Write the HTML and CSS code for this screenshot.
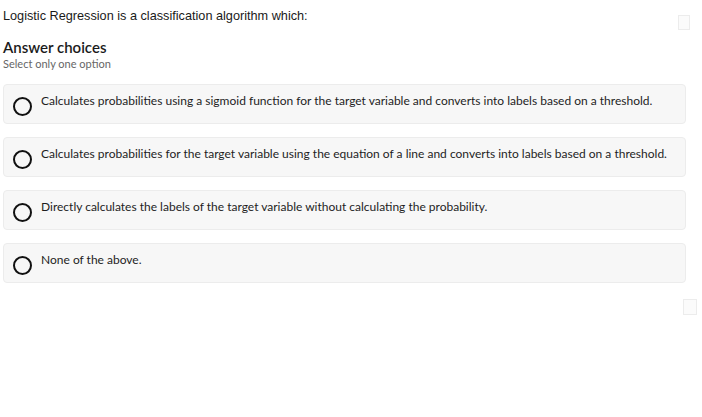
FILE: index.html
```html
<!DOCTYPE html>
<html>
<head>
<meta charset="utf-8">
<link rel="stylesheet" href="styles.css">
</head>
<body>
<div class="page">
  <p class="question">Logistic Regression is a classification algorithm which:</p>
  <h2 class="title">Answer choices</h2>
  <p class="hint">Select only one option</p>
  <ul class="choices">
    <li class="choice"><span class="radio"></span><span class="label">Calculates probabilities using a sigmoid function for the target variable and converts into labels based on a threshold.</span></li>
    <li class="choice"><span class="radio"></span><span class="label">Calculates probabilities for the target variable using the equation of a line and converts into labels based on a threshold.</span></li>
    <li class="choice"><span class="radio"></span><span class="label">Directly calculates the labels of the target variable without calculating the probability.</span></li>
    <li class="choice"><span class="radio"></span><span class="label">None of the above.</span></li>
  </ul>
  <span class="mark mark-top"></span>
  <span class="mark mark-bottom"></span>
</div>
</body>
</html>
```
FILE: styles.css
```css
html, body {
  margin: 0;
  padding: 0;
  background: #fff;
}
.page {
  position: relative;
  width: 702px;
  height: 417px;
  padding: 0 16px 0 3px;
  box-sizing: border-box;
}
.question {
  margin: 0;
  padding-top: 9px;
  font-family: "Liberation Sans", Arial, sans-serif;
  font-size: 12.7px;
  line-height: 14px;
  color: #1a1a1a;
}
.title {
  margin: 15px 0 0 0;
  font-family: Lato, sans-serif;
  font-weight: 600;
  font-size: 15px;
  line-height: 18px;
  color: #1b1b1b;
}
.hint {
  margin: 1px 0 0 0;
  font-family: Lato, sans-serif;
  font-size: 11px;
  line-height: 13px;
  color: #666;
}
.choices {
  list-style: none;
  margin: 14px 0 0 0;
  padding: 0;
  display: flex;
  flex-direction: column;
  gap: 13px;
}
.choice {
  height: 40px;
  box-sizing: border-box;
  border: 1px solid #ececec;
  border-radius: 4px;
  background: #f7f7f7;
  display: flex;
  align-items: flex-start;
  padding: 9px 10px 0 9px;
  gap: 9px;
}
.radio {
  flex: none;
  width: 19px;
  height: 19px;
  box-sizing: border-box;
  border: 2px solid #111;
  border-radius: 50%;
  margin-top: 3px;
}
.label {
  font-family: Lato, sans-serif;
  font-size: 12px;
  line-height: 14px;
  color: #1e1e1e;
}
.mark {
  position: absolute;
  box-sizing: border-box;
  border: 1px solid #ececec;
  background: #fbfbfb;
}
.mark-top {
  left: 678px;
  top: 15px;
  width: 12px;
  height: 15px;
}
.mark-bottom {
  left: 683px;
  top: 299px;
  width: 14px;
  height: 16px;
}
```
